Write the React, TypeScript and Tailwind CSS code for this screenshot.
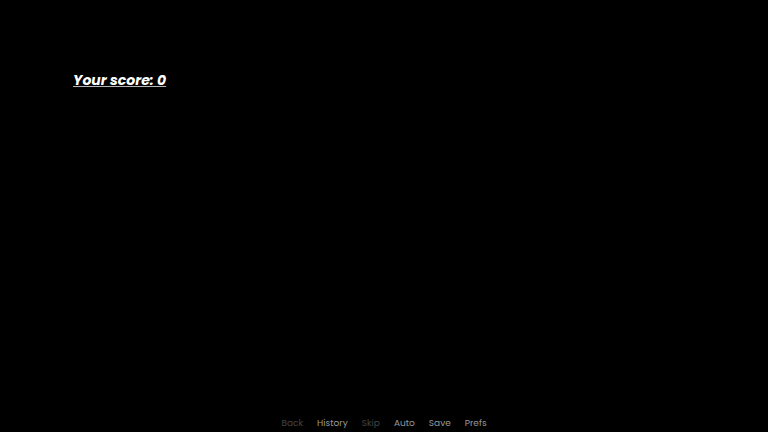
const quickMenu = [
  { label: 'Back', enabled: false },
  { label: 'History', enabled: true },
  { label: 'Skip', enabled: false },
  { label: 'Auto', enabled: true },
  { label: 'Save', enabled: true },
  { label: 'Prefs', enabled: true },
];

export default function App() {
  return (
    <div className="min-h-screen bg-black font-['Poppins','Inter',sans-serif] flex flex-col justify-between">
      <main className="px-[73px] pt-[70px]">
        <h1 className="text-sm leading-5 font-bold italic underline decoration-[#b4b4b4] text-white">
          Your score: 0
        </h1>
      </main>

      <nav className="flex justify-center gap-[14px] pb-[1px]">
        {quickMenu.map((item) => (
          <button
            key={item.label}
            type="button"
            disabled={!item.enabled}
            className="text-[9px] leading-4 text-[#999999] enabled:hover:text-white disabled:text-[#444444]"
          >
            {item.label}
          </button>
        ))}
      </nav>
    </div>
  );
}
